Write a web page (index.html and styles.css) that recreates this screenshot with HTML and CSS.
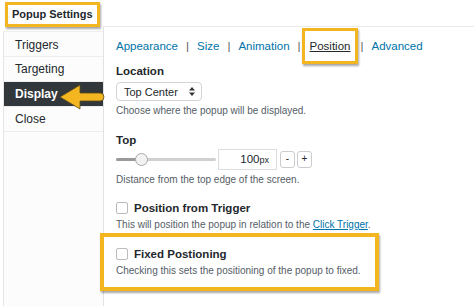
FILE: index.html
```html
<!DOCTYPE html>
<html lang="en">
<head>
    <meta charset="UTF-8">
    <title>Popup Settings</title>
    <link rel="stylesheet" href="styles.css">
</head>
<body>
    <div class="settings">
        <div class="side">
            <div class="title">Popup Settings</div>
            <ul class="side-tabs">
                <li>Triggers</li>
                <li>Targeting</li>
                <li class="active">Display
                    <svg class="arrow" width="48" height="28" viewBox="0 0 48 28">
                        <path d="M2 14 L22 2 L22 10 L42 10 Q46 10 46 14 Q46 18 42 18 L22 18 L22 26 Z" fill="#f3b620" stroke="#5a4a1a" stroke-width="0.8" stroke-linejoin="round"/>
                    </svg>
                </li>
                <li>Close</li>
            </ul>
        </div>
        <div class="panel">
            <div class="tabs">
                <a href="#">Appearance</a><span class="sep">|</span>
                <a href="#">Size</a><span class="sep">|</span>
                <a href="#">Animation</a><span class="sep">|</span>
                <a href="#" class="current">Position</a><span class="sep">|</span>
                <a href="#">Advanced</a>
            </div>

            <div class="field">
                <div class="label">Location</div>
                <div class="select">Top Center
                    <svg width="6" height="9" viewBox="0 0 6 9"><path d="M3 0 L6 3.5 L0 3.5 Z M0 5.5 L6 5.5 L3 9 Z" fill="#333"/></svg>
                </div>
                <p class="desc">Choose where the popup will be displayed.</p>
            </div>

            <div class="field spaced">
                <div class="label">Top</div>
                <div class="range-row">
                    <div class="track"><div class="fill"></div><div class="thumb"></div></div>
                    <div class="num">100<small>px</small></div>
                    <span class="step">-</span>
                    <span class="step">+</span>
                </div>
                <p class="desc">Distance from the top edge of the screen.</p>
            </div>

            <div class="field check-field">
                <label class="check"><span class="box"></span>Position from Trigger</label>
                <p class="desc">This will position the popup in relation to the <a href="#">Click Trigger</a>.</p>
            </div>

            <div class="field check-field marked">
                <label class="check"><span class="box"></span>Fixed Postioning</label>
                <p class="desc">Checking this sets the positioning of the popup to fixed.</p>
            </div>
        </div>
    </div>
</body>
</html>
```

FILE: styles.css
```css
body {
    margin: 0;
    background: #fff;
    font-family: "Liberation Sans", Arial, sans-serif;
    color: #23282d;
    font-size: 11.5px;
}
.settings {
    display: flex;
    height: 306px;
    overflow: hidden;
}
.side {
    width: 103px;
    flex-shrink: 0;
}
.title {
    margin: 2px 0 0 5px;
    width: 85px;
    height: 19px;
    border: 3px solid #f3b620;
    box-shadow: 1px 2px 2px rgba(0, 0, 0, 0.35);
    padding-left: 4px;
    font-weight: bold;
    font-size: 11px;
    line-height: 19px;
}
.side-tabs {
    list-style: none;
    margin: 4px 0 0 3px;
    padding: 0;
    border-left: 1px solid #e5e5e5;
    border-top: 1px solid #eee;
    background: #fcfcfc;
    height: 400px;
}
.side-tabs li {
    position: relative;
    height: 24px;
    line-height: 24px;
    padding-left: 11px;
    border-bottom: 1px solid #eee;
    font-size: 12px;
}
.side-tabs li:first-child {
    line-height: 26px;
}
.side-tabs li.active {
    background: #32373c;
    color: #fff;
    font-weight: bold;
}
.arrow {
    position: absolute;
    left: 54px;
    top: 1px;
}
.panel {
    flex: 1;
    margin-top: 26px;
    border-left: 1px solid #e2e2e2;
    border-top: 1px solid #eaeaea;
    padding: 11px 0 0 12px;
}
.tabs {
    display: flex;
    align-items: center;
    gap: 8px;
    font-size: 11.5px;
    line-height: 16px;
    height: 16px;
}
.tabs a {
    color: #0073aa;
    text-decoration: none;
}
.tabs .sep {
    color: #555;
}
.tabs a.current {
    color: #23282d;
    text-decoration: underline;
    border: 3px solid #f3b620;
    box-shadow: 1px 2px 2px rgba(0, 0, 0, 0.35);
    padding: 7px 5px;
    margin: 0 -6px 0 -7px;
    background: #fff;
}
.field {
    margin-top: 9px;
}
.field.spaced {
    margin-top: 14px;
}
.label {
    font-weight: bold;
    font-size: 11.5px;
    line-height: 16px;
}
.select {
    display: flex;
    align-items: center;
    justify-content: space-between;
    width: 71px;
    height: 17px;
    margin-top: 3px;
    padding: 0 6px 0 7px;
    border: 1px solid #d4d4d4;
    border-radius: 4px;
    font-size: 11px;
}
.desc {
    margin: 3px 0 0;
    font-size: 10px;
    line-height: 14px;
    color: #555d66;
}
.desc a {
    color: #0073aa;
}
.range-row {
    display: flex;
    align-items: center;
    margin-top: 1px;
    height: 21px;
}
.track {
    position: relative;
    width: 100px;
    height: 3px;
    background: #d0d0d0;
    border-radius: 2px;
}
.fill {
    width: 25px;
    height: 3px;
    background: #9a9a9a;
    border-radius: 2px;
}
.thumb {
    position: absolute;
    left: 19px;
    top: -5px;
    width: 13px;
    height: 13px;
    border: 1px solid #a8a8a8;
    border-radius: 50%;
    background: #f2f2f2;
    box-sizing: border-box;
}
.num {
    width: 50px;
    height: 19px;
    margin-left: 2px;
    border: 1px solid #ddd;
    text-align: right;
    padding-right: 7px;
    line-height: 19px;
    font-size: 11.5px;
}
.num small {
    font-size: 9px;
}
.step {
    width: 13px;
    height: 15px;
    margin-left: 3px;
    border: 1px solid #ccc;
    border-radius: 3px;
    text-align: center;
    line-height: 14px;
    font-size: 10px;
}
.step + .step {
    margin-left: 2px;
}
.check-field {
    margin-top: 13px;
}
.check {
    display: flex;
    align-items: center;
    gap: 6px;
    font-weight: bold;
    font-size: 11.5px;
    line-height: 16px;
}
.box {
    width: 10px;
    height: 10px;
    border: 1px solid #bbb;
    border-radius: 2px;
    background: #fff;
}
.check + .desc {
    margin-top: 2px;
}
.marked {
    margin: 1px 0 0 -16px;
    width: 259px;
    padding: 9px 0 9px 12px;
    border: 4px solid #f3b620;
    box-shadow: 1px 2px 2px rgba(0, 0, 0, 0.35);
}
```
